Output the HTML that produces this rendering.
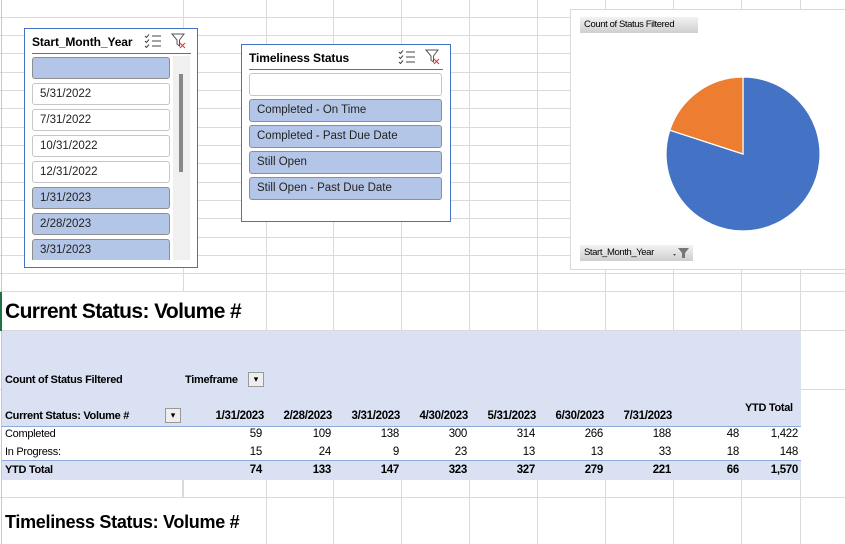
<!DOCTYPE html>
<html><head><meta charset="utf-8"><style>
*{margin:0;padding:0;box-sizing:border-box}
body{width:845px;height:544px;overflow:hidden;background:#fff;position:relative;font-family:"Liberation Sans",sans-serif;color:#000}
.a{position:absolute}
.vl{position:absolute;width:1px;background:#dadada}
.hl{position:absolute;height:1px;background:#dadada;left:0;width:845px}
.sl{position:absolute;background:#fff;border:1px solid #4472c4}
.sl .t{position:absolute;font-weight:bold;font-size:12px;letter-spacing:-0.1px}
.it{position:absolute;border:1px solid #c6c6c6;border-radius:3px;background:#fff;font-size:11.5px;padding-left:7px;line-height:21px;color:#222}
.it.s{background:#b4c6e7;border-color:#8f8f8f}
.tb{font-size:11px;letter-spacing:-0.3px}
.n{position:absolute;text-align:right;font-size:11.5px;letter-spacing:-0.3px}
.b{font-weight:bold}
</style></head><body>
<div class="hl" style="top:17px"></div><div class="hl" style="top:35px"></div><div class="hl" style="top:53px"></div><div class="hl" style="top:72px"></div><div class="hl" style="top:90px"></div><div class="hl" style="top:108px"></div><div class="hl" style="top:127px"></div><div class="hl" style="top:145px"></div><div class="hl" style="top:163px"></div><div class="hl" style="top:182px"></div><div class="hl" style="top:200px"></div><div class="hl" style="top:218px"></div><div class="hl" style="top:237px"></div><div class="hl" style="top:255px"></div><div class="hl" style="top:273px"></div><div class="hl" style="top:291px"></div><div class="hl" style="top:330px"></div><div class="hl" style="top:389px"></div><div class="hl" style="top:497px"></div>
<div class="vl" style="left:1px;top:0;height:544px;background:#c8c8c8"></div>
<div class="vl" style="left:183px;top:0;height:292px"></div>
<div class="vl" style="left:183px;top:480px;height:17px"></div>
<div class="vl" style="left:266px;top:0;height:544px"></div>
<div class="vl" style="left:333px;top:0;height:544px"></div>
<div class="vl" style="left:401px;top:0;height:544px"></div>
<div class="vl" style="left:469px;top:0;height:544px"></div>
<div class="vl" style="left:537px;top:0;height:544px"></div>
<div class="vl" style="left:605px;top:0;height:544px"></div>
<div class="vl" style="left:673px;top:0;height:544px"></div>
<div class="vl" style="left:741px;top:0;height:544px"></div>
<div class="vl" style="left:800px;top:0;height:544px"></div>
<div class="a" style="left:0;top:292px;width:2px;height:39px;background:#217346"></div>

<div class="a b" style="left:5px;top:298px;font-size:21px;letter-spacing:-0.6px;background:#fff;width:260px;height:30px;line-height:28px">Current Status: Volume #</div>

<div class="a" style="left:2px;top:331px;width:799px;height:149px;background:#d9e1f2"></div>
<div class="a" style="left:2px;top:426px;width:799px;height:35px;background:#fff;border-top:1px solid #8ea9db;border-bottom:1px solid #8ea9db"></div>
<div class="a tb b" style="left:5px;top:374px">Count of Status Filtered</div>
<div class="a tb b" style="left:185px;top:374px">Timeframe</div>
<div class="a" style="left:248px;top:372px;width:16px;height:15px;border:1px solid #999;background:#eee;font-size:9px;text-align:center;line-height:13px">▾</div>
<div class="a tb b" style="left:5px;top:410px">Current Status: Volume #</div>
<div class="a" style="left:165px;top:408px;width:16px;height:15px;border:1px solid #999;background:#eee;font-size:9px;text-align:center;line-height:13px">▾</div>
<div class="a tb b" style="left:745px;top:402px">YTD Total</div>
<div class="n b" style="left:186px;top:410px;width:78px">1/31/2023</div>
<div class="n b" style="left:266px;top:410px;width:66px">2/28/2023</div>
<div class="n b" style="left:334px;top:410px;width:66px">3/31/2023</div>
<div class="n b" style="left:402px;top:410px;width:66px">4/30/2023</div>
<div class="n b" style="left:470px;top:410px;width:66px">5/31/2023</div>
<div class="n b" style="left:538px;top:410px;width:66px">6/30/2023</div>
<div class="n b" style="left:606px;top:410px;width:66px">7/31/2023</div>
<div class="a tb" style="left:5px;top:428px">Completed</div>
<div class="a tb" style="left:5px;top:446px">In Progress:</div>
<div class="a tb b" style="left:5px;top:464px">YTD Total</div>
<div class="n" style="left:200px;top:428px;width:62px">59</div><div class="n" style="left:270px;top:428px;width:61px">109</div><div class="n" style="left:338px;top:428px;width:61px">138</div><div class="n" style="left:406px;top:428px;width:61px">300</div><div class="n" style="left:474px;top:428px;width:61px">314</div><div class="n" style="left:542px;top:428px;width:61px">266</div><div class="n" style="left:610px;top:428px;width:61px">188</div><div class="n" style="left:678px;top:428px;width:61px">48</div><div class="n" style="left:740px;top:428px;width:58px">1,422</div>
<div class="n" style="left:200px;top:446px;width:62px">15</div><div class="n" style="left:270px;top:446px;width:61px">24</div><div class="n" style="left:338px;top:446px;width:61px">9</div><div class="n" style="left:406px;top:446px;width:61px">23</div><div class="n" style="left:474px;top:446px;width:61px">13</div><div class="n" style="left:542px;top:446px;width:61px">13</div><div class="n" style="left:610px;top:446px;width:61px">33</div><div class="n" style="left:678px;top:446px;width:61px">18</div><div class="n" style="left:740px;top:446px;width:58px">148</div>
<div class="n b" style="left:200px;top:464px;width:62px">74</div><div class="n b" style="left:270px;top:464px;width:61px">133</div><div class="n b" style="left:338px;top:464px;width:61px">147</div><div class="n b" style="left:406px;top:464px;width:61px">323</div><div class="n b" style="left:474px;top:464px;width:61px">327</div><div class="n b" style="left:542px;top:464px;width:61px">279</div><div class="n b" style="left:610px;top:464px;width:61px">221</div><div class="n b" style="left:678px;top:464px;width:61px">66</div><div class="n b" style="left:740px;top:464px;width:58px">1,570</div>
<div class="a" style="left:2px;top:480px;width:181px;height:17px;background:#fff;border-right:1px solid #dadada"></div>
<div class="a" style="left:2px;top:498px;width:264px;height:46px;background:#fff"></div>
<div class="a b" style="left:5px;top:512px;font-size:18px;letter-spacing:-0.3px">Timeliness Status: Volume #</div>

<div class="sl" style="left:24px;top:28px;width:174px;height:240px">
 <div class="t" style="left:7px;top:6px">Start_Month_Year</div>
 <svg class="a" style="left:119px;top:5px" width="18" height="14" viewBox="0 0 18 14" fill="none" stroke="#444" stroke-width="1"><path d="M1 2l1.5 1.5L5 0.5M1 7l1.5 1.5L5 5.5M1 12l1.5 1.5L5 10.5M8 2h9M8 7h9M8 12h9"/></svg>
 <svg class="a" style="left:146px;top:4px" width="16" height="16" viewBox="0 0 16 16" fill="none"><path d="M1 1h12L8.5 7v6L6 11V7z" stroke="#555"/><path d="M9 10l5 5M14 10l-5 5" stroke="#e03030"/></svg>
 <div class="a" style="left:7px;top:24px;width:159px;height:1px;background:#4472c4"></div>
</div>
<div class="it s" style="left:32px;top:57px;width:138px;height:22px"></div>
<div class="it" style="left:32px;top:83px;width:138px;height:22px">5/31/2022</div>
<div class="it" style="left:32px;top:109px;width:138px;height:22px">7/31/2022</div>
<div class="it" style="left:32px;top:135px;width:138px;height:22px">10/31/2022</div>
<div class="it" style="left:32px;top:161px;width:138px;height:22px">12/31/2022</div>
<div class="it s" style="left:32px;top:187px;width:138px;height:22px">1/31/2023</div>
<div class="it s" style="left:32px;top:213px;width:138px;height:22px">2/28/2023</div>
<div class="it s" style="left:32px;top:239px;width:138px;height:21px;border-bottom:none;border-radius:3px 3px 0 0">3/31/2023</div>
<div class="a" style="left:173px;top:56px;width:17px;height:204px;background:#f0f0f0"></div>
<div class="a" style="left:179px;top:74px;width:4px;height:98px;background:#888"></div>

<div class="sl" style="left:241px;top:44px;width:210px;height:178px">
 <div class="t" style="left:7px;top:6px">Timeliness Status</div>
 <svg class="a" style="left:156px;top:5px" width="18" height="14" viewBox="0 0 18 14" fill="none" stroke="#444" stroke-width="1"><path d="M1 2l1.5 1.5L5 0.5M1 7l1.5 1.5L5 5.5M1 12l1.5 1.5L5 10.5M8 2h9M8 7h9M8 12h9"/></svg>
 <svg class="a" style="left:183px;top:4px" width="16" height="16" viewBox="0 0 16 16" fill="none"><path d="M1 1h12L8.5 7v6L6 11V7z" stroke="#555"/><path d="M9 10l5 5M14 10l-5 5" stroke="#e03030"/></svg>
 <div class="a" style="left:7px;top:24px;width:194px;height:1px;background:#4472c4"></div>
</div>
<div class="it" style="left:249px;top:73px;width:193px;height:23px"></div>
<div class="it s" style="left:249px;top:99px;width:193px;height:23px">Completed - On Time</div>
<div class="it s" style="left:249px;top:125px;width:193px;height:23px">Completed - Past Due Date</div>
<div class="it s" style="left:249px;top:151px;width:193px;height:23px">Still Open</div>
<div class="it s" style="left:249px;top:177px;width:193px;height:23px">Still Open - Past Due Date</div>

<div class="a" style="left:570px;top:9px;width:280px;height:261px;background:#fff;border:1px solid #d9d9d9"></div>
<div class="a" style="left:580px;top:17px;width:118px;height:16px;background:linear-gradient(#f2f2f2,#cfcfcf);font-size:9.5px;line-height:16px;padding-left:4px;letter-spacing:-0.4px">Count of Status Filtered</div>
<svg class="a" style="left:0;top:0" width="845" height="544">
 <path d="M743 154 L743 77 A77 77 0 1 1 669.8 130.2 Z" fill="#4472c4" stroke="#fff" stroke-width="1.2"/>
 <path d="M743 154 L669.8 130.2 A77 77 0 0 1 743 77 Z" fill="#ed7d31" stroke="#fff" stroke-width="1.2"/>
</svg>
<div class="a" style="left:580px;top:245px;width:113px;height:16px;background:linear-gradient(#f2f2f2,#cfcfcf);font-size:9.5px;line-height:16px;padding-left:4px;letter-spacing:-0.4px">Start_Month_Year</div>
<svg class="a" style="left:672px;top:247px" width="18" height="12" viewBox="0 0 18 12"><path d="M1 7h3l-1.5 2z" fill="#555"/><path d="M6 1h11l-4 5v5h-3V6z" fill="#777"/></svg>
</body></html>
